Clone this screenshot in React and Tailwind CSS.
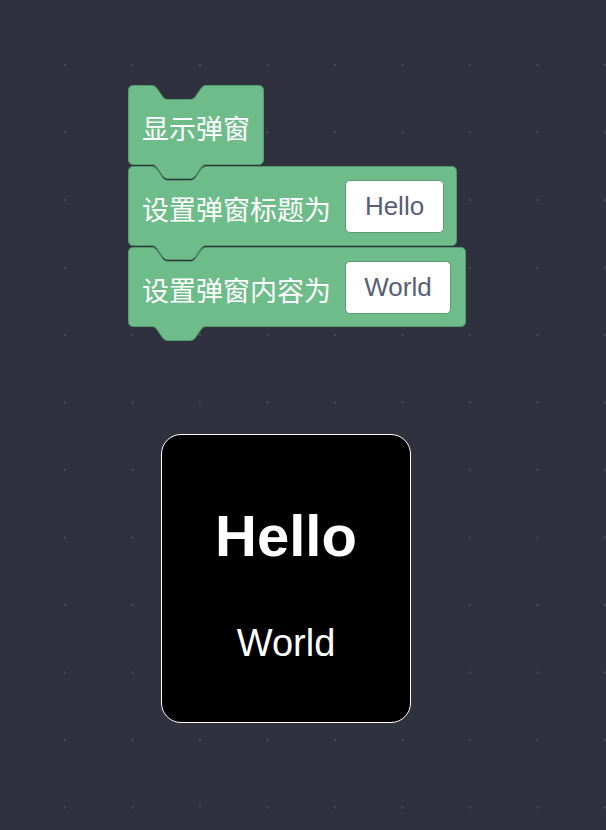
import React from "react";

function blockPath(w, h, r = 5) {
  const top =
    `M 0 ${r} Q 0 0 ${r} 0 H 23 C 25.5 0 27 1 28.5 3 L 34 11 C 35.5 13 37 14 39.5 14 H 61.5 C 64 14 65.5 13 67 11 L 72.5 3 C 74 1 75.5 0 78 0 ` +
    `H ${w - r} Q ${w} 0 ${w} ${r} V ${h - r} Q ${w} ${h} ${w - r} ${h} H 78 ` +
    `C 75.5 ${h} 74 ${h + 1} 72.5 ${h + 3} L 67 ${h + 11} C 65.5 ${h + 13} 64 ${h + 14} 61.5 ${h + 14} H 39.5 C 37 ${h + 14} 35.5 ${h + 13} 34 ${h + 11} L 28.5 ${h + 3} C 27 ${h + 1} 25.5 ${h} 23 ${h} ` +
    `H ${r} Q 0 ${h} 0 ${h - r} Z`;
  return top;
}

function Block({ w, label, input, inputW }) {
  const h = 80;
  return (
    <div className="relative h-[80px]" style={{ width: w }}>
      <svg
        className="absolute left-0 top-0 overflow-visible"
        width={w}
        height={h + 15}
      >
        <path
          d={blockPath(w - 1, h - 1)}
          transform="translate(0.5 0.5)"
          fill="#6fbc8b"
          stroke="#559a6c"
          strokeWidth="1"
        />
      </svg>
      <div className="relative flex h-full items-center gap-[14px] pl-[14px]">
        <span className="pt-[5px] text-[27px] leading-none text-white whitespace-nowrap [font-family:'Noto_Sans_CJK_SC','Noto_Sans',sans-serif]">
          {label}
        </span>
        {input && (
          <div
            className="flex h-[53px] items-center justify-center rounded-[5px] border border-[#5f9a73] bg-white text-[26px] leading-none text-[#575e75] [font-family:'Liberation_Sans',Arial,sans-serif]"
            style={{ width: inputW }}
          >
            {input}
          </div>
        )}
      </div>
    </div>
  );
}

export default function App() {
  return (
    <div className="relative h-[830px] w-[606px] overflow-hidden bg-[#2f313e]">
      <svg className="absolute inset-0" width="606" height="830">
        <defs>
          <pattern
            id="dots"
            x="31.25"
            y="31.25"
            width="67.5"
            height="67.5"
            patternUnits="userSpaceOnUse"
          >
            <circle cx="33.75" cy="33.75" r="1.2" fill="#464959" />
          </pattern>
        </defs>
        <rect width="606" height="830" fill="url(#dots)" />
      </svg>

      <div className="absolute left-[128px] top-[85px] flex flex-col gap-[1px]">
        <Block w={136} label="显示弹窗" />
        <Block w={329} label="设置弹窗标题为" input="Hello" inputW={99} />
        <Block w={338} label="设置弹窗内容为" input="World" inputW={106} />
      </div>

      <div className="absolute left-[161px] top-[434px] flex h-[289px] w-[250px] flex-col items-center rounded-[20px] border-[1.5px] border-white bg-black pt-[72px] [font-family:'Liberation_Sans',Arial,sans-serif]">
        <div className="text-[58px] font-bold leading-none text-white">Hello</div>
        <div className="mt-[59px] text-[38px] leading-none text-white">World</div>
      </div>
    </div>
  );
}
